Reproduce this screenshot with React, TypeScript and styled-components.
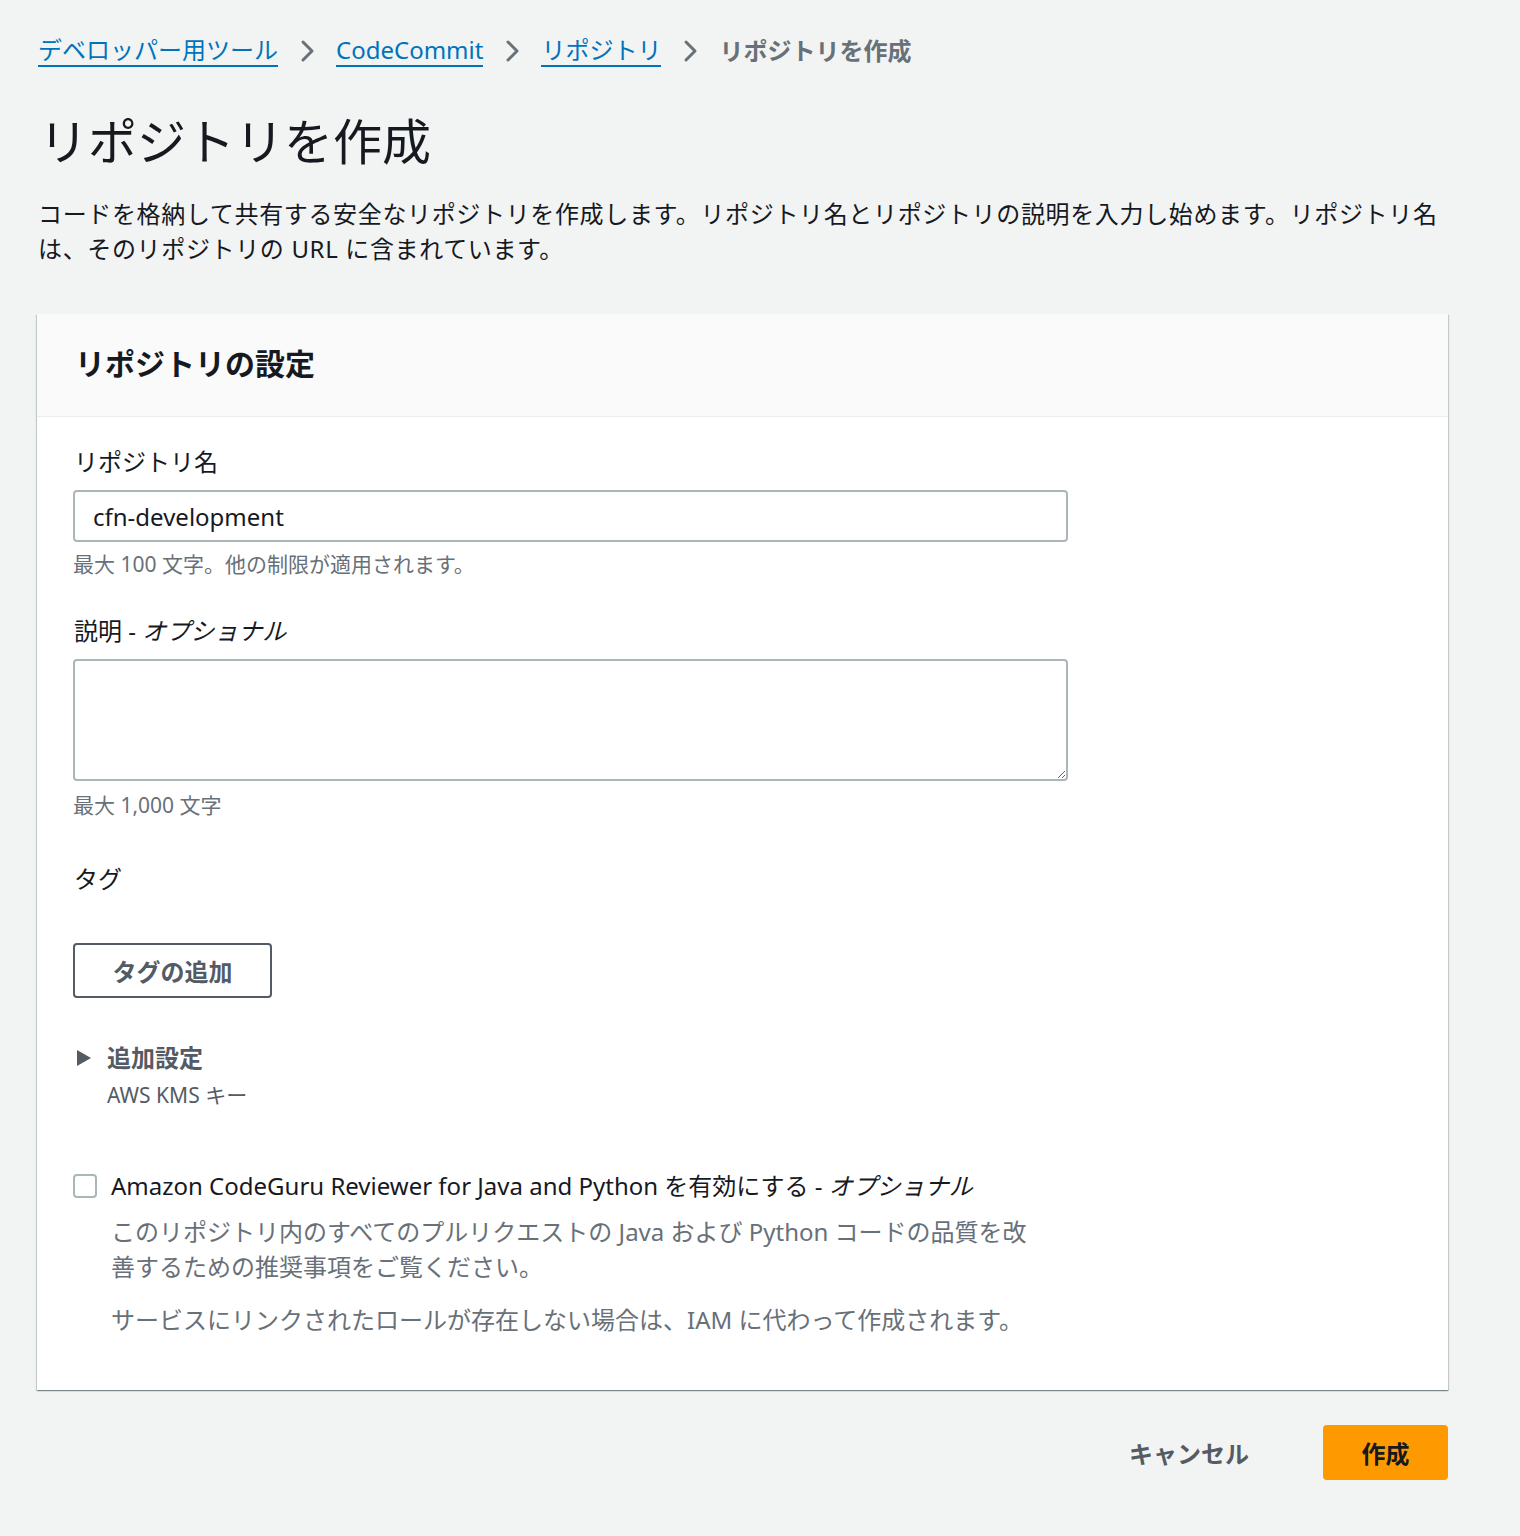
import React from "react";
import styled, { createGlobalStyle } from "styled-components";

const GlobalStyle = createGlobalStyle`
  html, body {
    margin: 0;
    padding: 0;
    background: #f2f3f3;
  }
  body {
    font-family: "Noto Sans", "Noto Sans CJK JP", sans-serif;
    color: #16191f;
  }
  * { box-sizing: border-box; }
`;

const Page = styled.div`
  width: 1411px;
  margin-left: 37px;
  padding-top: 34px;
  padding-bottom: 56px;
`;

const Breadcrumbs = styled.nav`
  display: flex;
  align-items: center;
  gap: 20px;
  font-size: 24px;
  line-height: 32px;
  padding-left: 1px;
`;

const Crumb = styled.a`
  color: #0073bb;
  text-decoration: none;
  border-bottom: 2px solid #0073bb;
  line-height: 28px;
  padding-bottom: 1px;
  margin-top: 2px;
`;

const CurrentCrumb = styled.span`
  color: #687078;
  font-weight: 700;
`;

const Chevron = styled.svg`
  width: 18px;
  height: 24px;
  flex: none;
`;

const Title = styled.h1`
  margin: 44px 0 0 2px;
  font-size: 49px;
  line-height: 60px;
  font-weight: 400;
  color: #16191f;
`;

const Description = styled.p`
  margin: 25px 0 0 1px;
  font-size: 24px;
  line-height: 35px;
  letter-spacing: 0.65px;
  color: #16191f;
`;

const Card = styled.section`
  margin-top: 48px;
  background: #fff;
  box-shadow: 0 1px 1px 0 rgba(0, 28, 36, 0.3), 1px 1px 1px 0 rgba(0, 28, 36, 0.15),
    -1px 1px 1px 0 rgba(0, 28, 36, 0.15);
`;

const CardHeader = styled.header`
  background: #fafafa;
  border-bottom: 1px solid #eaeded;
  padding: 32px 38px 34px;
`;

const CardTitle = styled.h2`
  margin: 0;
  font-size: 30px;
  line-height: 36px;
  font-weight: 700;
  color: #16191f;
`;

const CardBody = styled.div`
  padding: 29px 36px 53px;
  display: flex;
  flex-direction: column;
`;

const Field = styled.div<{ $mt?: number }>`
  display: flex;
  flex-direction: column;
  width: 995px;
  margin-top: ${(p) => p.$mt ?? 0}px;
`;

const Label = styled.label`
  font-size: 24px;
  line-height: 32px;
  color: #16191f;
  padding-left: 1px;
`;

const Italic = styled.i`
  font-style: italic;
`;

const TextInput = styled.input`
  margin-top: 12px;
  height: 52px;
  border: 2px solid #aab7b8;
  border-radius: 4px;
  padding: 0 18px;
  font-family: "Noto Sans", "Noto Sans CJK JP", sans-serif;
  font-size: 24px;
  color: #16191f;
  outline: none;
  background: #fff;
`;

const TextArea = styled.textarea`
  margin-top: 12px;
  height: 122px;
  border: 2px solid #aab7b8;
  border-radius: 4px;
  padding: 10px 18px;
  font-family: "Noto Sans", "Noto Sans CJK JP", sans-serif;
  font-size: 24px;
  resize: vertical;
  outline: none;
  background: #fff;
`;

const Hint = styled.div<{ $mt: number }>`
  margin-top: ${(p) => p.$mt}px;
  font-size: 21px;
  line-height: 28px;
  color: #687078;
`;

const SecondaryButton = styled.button`
  margin-top: 48px;
  align-self: flex-start;
  width: 199px;
  height: 55px;
  border: 2px solid #545b64;
  border-radius: 4px;
  background: #fff;
  color: #545b64;
  font-family: "Noto Sans", "Noto Sans CJK JP", sans-serif;
  font-size: 24px;
  font-weight: 700;
  cursor: pointer;
`;

const Expander = styled.div`
  margin-top: 44px;
  display: flex;
  flex-direction: column;
`;

const ExpanderHead = styled.div`
  display: flex;
  align-items: center;
  gap: 15px;
  font-size: 24px;
  line-height: 32px;
  font-weight: 700;
  color: #545b64;
`;

const Caret = styled.svg`
  width: 16px;
  height: 18px;
  margin-left: 3px;
  flex: none;
`;

const ExpanderSub = styled.div`
  margin-left: 34px;
  margin-top: 6px;
  font-size: 21px;
  line-height: 30px;
  color: #545b64;
`;

const CheckRow = styled.div`
  margin-top: 60px;
  display: flex;
  align-items: flex-start;
  gap: 14px;
`;

const CheckBox = styled.span`
  width: 24px;
  height: 24px;
  margin-top: 4px;
  border: 2px solid #aab7b8;
  border-radius: 4px;
  background: #fff;
  flex: none;
`;

const CheckContent = styled.div`
  display: flex;
  flex-direction: column;
  width: 930px;
`;

const CheckLabel = styled.div`
  font-size: 24px;
  line-height: 32px;
  color: #16191f;
  white-space: nowrap;
`;

const CheckDesc = styled.p<{ $mt: number }>`
  margin: ${(p) => p.$mt}px 0 0;
  font-size: 24px;
  line-height: 35px;
  color: #687078;
`;

const Footer = styled.div`
  margin-top: 35px;
  display: flex;
  justify-content: flex-end;
  align-items: center;
  gap: 38px;
`;

const LinkButton = styled.button`
  height: 55px;
  padding: 0 36px;
  border: none;
  background: transparent;
  color: #545b64;
  font-family: "Noto Sans", "Noto Sans CJK JP", sans-serif;
  font-size: 24px;
  font-weight: 700;
  cursor: pointer;
`;

const PrimaryButton = styled.button`
  width: 125px;
  height: 55px;
  border: none;
  border-radius: 4px;
  background: #ff9900;
  color: #16191f;
  font-family: "Noto Sans", "Noto Sans CJK JP", sans-serif;
  font-size: 24px;
  font-weight: 700;
  cursor: pointer;
`;

const ChevronIcon = () => (
  <Chevron viewBox="0 0 18 24" aria-hidden>
    <path d="M5 3 L14 12 L5 21" fill="none" stroke="#687078" strokeWidth="3" strokeLinecap="round" strokeLinejoin="round" />
  </Chevron>
);

export default function App() {
  return (
    <>
      <GlobalStyle />
      <Page>
        <Breadcrumbs>
          <Crumb href="#">デベロッパー用ツール</Crumb>
          <ChevronIcon />
          <Crumb href="#">CodeCommit</Crumb>
          <ChevronIcon />
          <Crumb href="#">リポジトリ</Crumb>
          <ChevronIcon />
          <CurrentCrumb>リポジトリを作成</CurrentCrumb>
        </Breadcrumbs>
        <Title>リポジトリを作成</Title>
        <Description>
          コードを格納して共有する安全なリポジトリを作成します。リポジトリ名とリポジトリの説明を入力し始めます。リポジトリ名は、そのリポジトリの URL に含まれています。
        </Description>
        <Card>
          <CardHeader>
            <CardTitle>リポジトリの設定</CardTitle>
          </CardHeader>
          <CardBody>
            <Field>
              <Label>リポジトリ名</Label>
              <TextInput defaultValue="cfn-development" />
              <Hint $mt={8}>最大 100 文字。他の制限が適用されます。</Hint>
            </Field>
            <Field $mt={37}>
              <Label>
                説明 - <Italic>オプショナル</Italic>
              </Label>
              <TextArea />
              <Hint $mt={10}>最大 1,000 文字</Hint>
            </Field>
            <Field $mt={44}>
              <Label>タグ</Label>
            </Field>
            <SecondaryButton>タグの追加</SecondaryButton>
            <Expander>
              <ExpanderHead>
                <Caret viewBox="0 0 16 18" aria-hidden>
                  <path d="M1 1 L15 9 L1 17 Z" fill="#545b64" />
                </Caret>
                追加設定
              </ExpanderHead>
              <ExpanderSub>AWS KMS キー</ExpanderSub>
            </Expander>
            <CheckRow>
              <CheckBox />
              <CheckContent>
                <CheckLabel>
                  Amazon CodeGuru Reviewer for Java and Python を有効にする - <Italic>オプショナル</Italic>
                </CheckLabel>
                <CheckDesc $mt={12}>
                  このリポジトリ内のすべてのプルリクエストの Java および Python コードの品質を改善するための推奨事項をご覧ください。
                </CheckDesc>
                <CheckDesc $mt={18}>
                  サービスにリンクされたロールが存在しない場合は、IAM に代わって作成されます。
                </CheckDesc>
              </CheckContent>
            </CheckRow>
          </CardBody>
        </Card>
        <Footer>
          <LinkButton>キャンセル</LinkButton>
          <PrimaryButton>作成</PrimaryButton>
        </Footer>
      </Page>
    </>
  );
}
